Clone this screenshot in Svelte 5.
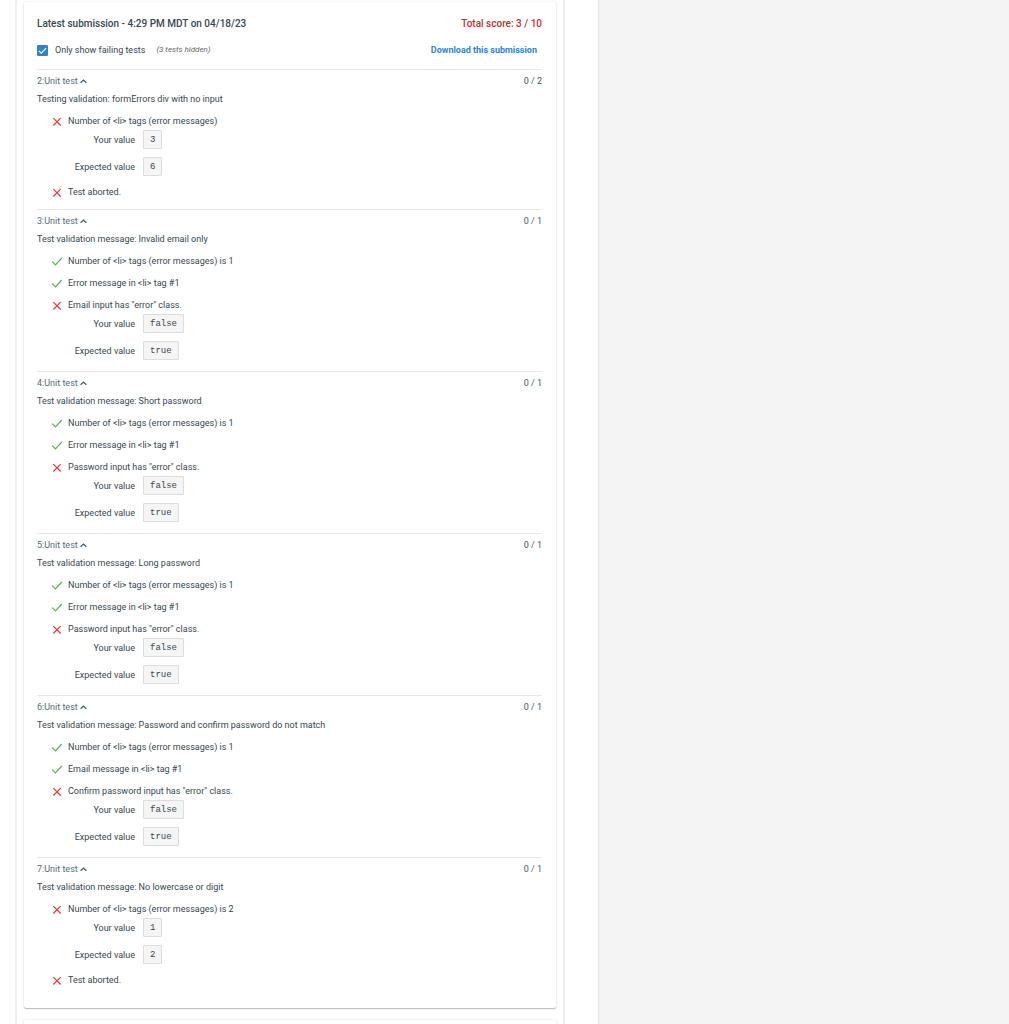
<script>
  let onlyFailing = $state(true);

  const isOne = { ok: true, text: 'Number of <li> tags (error messages) is 1' };
  const errorTag = { ok: true, text: 'Error message in <li> tag #1' };
  const aborted = { ok: false, text: 'Test aborted.' };

  let tests = $state([
    {
      number: 2,
      score: '0 / 2',
      open: true,
      description: 'Testing validation: formErrors div with no input',
      checks: [
        { ok: false, text: 'Number of <li> tags (error messages)', actual: '3', expected: '6' },
        aborted
      ]
    },
    {
      number: 3,
      score: '0 / 1',
      open: true,
      description: 'Test validation message: Invalid email only',
      checks: [
        isOne,
        errorTag,
        { ok: false, text: 'Email input has "error" class.', actual: 'false', expected: 'true' }
      ]
    },
    {
      number: 4,
      score: '0 / 1',
      open: true,
      description: 'Test validation message: Short password',
      checks: [
        isOne,
        errorTag,
        { ok: false, text: 'Password input has "error" class.', actual: 'false', expected: 'true' }
      ]
    },
    {
      number: 5,
      score: '0 / 1',
      open: true,
      description: 'Test validation message: Long password',
      checks: [
        isOne,
        errorTag,
        { ok: false, text: 'Password input has "error" class.', actual: 'false', expected: 'true' }
      ]
    },
    {
      number: 6,
      score: '0 / 1',
      open: true,
      description: 'Test validation message: Password and confirm password do not match',
      checks: [
        isOne,
        { ok: true, text: 'Email message in <li> tag #1' },
        { ok: false, text: 'Confirm password input has "error" class.', actual: 'false', expected: 'true' }
      ]
    },
    {
      number: 7,
      score: '0 / 1',
      open: true,
      description: 'Test validation message: No lowercase or digit',
      checks: [
        { ok: false, text: 'Number of <li> tags (error messages) is 2', actual: '1', expected: '2' },
        aborted
      ]
    }
  ]);
</script>

<div class="page">
  <main class="content">
    <div class="activity">
      <section class="card">
        <header class="row title">
          <h2>Latest submission - 4:29 PM MDT on 04/18/23</h2>
          <span class="total">Total score: 3 / 10</span>
        </header>

        <div class="row options">
          <label class="filter">
            <span class="box">
              <input type="checkbox" bind:checked={onlyFailing} />
              <svg viewBox="0 0 12 12" aria-hidden="true"><path d="M2 6.5 4.6 9 10 3.5" /></svg>
            </span>
            Only show failing tests
          </label>
          {#if onlyFailing}
            <em>(3 tests hidden)</em>
          {/if}
          <a href="#download">Download this submission</a>
        </div>

        {#each tests as test (test.number)}
          <article class="test">
            <div class="row">
              <button type="button" aria-expanded={test.open} onclick={() => (test.open = !test.open)}>
                {test.number}:Unit test
                <svg class:closed={!test.open} viewBox="0 0 7 6" aria-hidden="true"><path d="M.6 4.8 3.5 2 6.4 4.8" /></svg>
              </button>
              <span class="score">{test.score}</span>
            </div>
            {#if test.open}
              <p>{test.description}</p>
              <ul>
                {#each test.checks as check}
                  <li>
                    <div class="check">
                      {#if check.ok}
                        <svg class="pass" viewBox="0 0 12 10" role="img" aria-label="Passed"><path d="M1.2 5.6 4.4 8.8 10.8 2" /></svg>
                      {:else}
                        <svg class="fail" viewBox="0 0 12 10" role="img" aria-label="Failed"><path d="M2.3 2.1 9.7 9.5M9.7 2.1 2.3 9.5" /></svg>
                      {/if}
                      <span>{check.text}</span>
                    </div>
                    {#if check.expected}
                      <dl>
                        <dt>Your value</dt>
                        <dd><code>{check.actual}</code></dd>
                        <dt>Expected value</dt>
                        <dd><code>{check.expected}</code></dd>
                      </dl>
                    {/if}
                  </li>
                {/each}
              </ul>
            {/if}
          </article>
        {/each}
      </section>
      <section class="card next"></section>
    </div>
  </main>
</div>

<style>
  :global(body) {
    margin: 0;
    background: #f4f4f4;
  }

  .page {
    height: 100vh;
    overflow: hidden;
    font-family: Roboto, sans-serif;
    font-size: 9px;
    line-height: 12px;
    color: #37474f;
  }

  .content {
    box-sizing: border-box;
    width: 60%;
    max-width: 598px;
    min-height: 100%;
    padding: 0 33px 0 15px;
    background: #fff;
    box-shadow: 0 0 2px #ccc;
  }

  .activity {
    padding: 2px 7px 0;
    border: solid #eee;
    border-width: 0 2px;
  }

  .card {
    padding: 13px 14px 11px 13px;
    margin-bottom: 12px;
    background: #fff;
    border-radius: 2px;
    box-shadow: 0 1px 1px #bbb, 0 0 3px #e4e4e4;
  }

  .next {
    height: 100px;
  }

  .row {
    display: flex;
    align-items: center;
    justify-content: space-between;
  }

  .title {
    height: 18px;
    font-size: 10px;
    font-weight: 500;
  }

  h2 {
    margin: 0;
    font-size: 10px;
    font-weight: 500;
  }

  .total {
    color: #c62f2c;
  }

  .options {
    height: 34px;
    padding-right: 5px;
    margin-bottom: 2px;
  }

  .filter {
    display: flex;
    align-items: center;
    gap: 7px;
  }

  .box {
    display: grid;
    width: 11px;
    height: 11px;
  }

  .box input,
  .box svg {
    grid-area: 1 / 1;
    width: 11px;
    height: 11px;
    margin: 0;
  }

  .box input {
    appearance: none;
    border: 1px solid #3182ce;
    border-radius: 1px;
  }

  .box input:checked {
    background: #3182ce;
  }

  .box svg {
    pointer-events: none;
    stroke: #fff;
  }

  em {
    margin-left: 11px;
    font-size: 8px;
    color: #666;
  }

  a {
    margin-left: auto;
    font-weight: 700;
    color: #2e85d0;
    text-decoration: none;
  }

  svg {
    fill: none;
    stroke-width: 1.2;
  }

  .test {
    padding: 2px 0 1px;
    border-top: 1px solid #e8e8e8;
  }

  .test .row {
    height: 18px;
  }

  .score {
    color: #455a64;
  }

  button {
    display: flex;
    align-items: center;
    gap: 2px;
    padding: 0;
    border: 0;
    background: none;
    font: inherit;
    color: #546e7a;
    cursor: pointer;
  }

  button svg {
    width: 7px;
    height: 6px;
    stroke: #455a64;
  }

  .closed {
    transform: rotate(180deg);
  }

  p {
    margin: 0;
    line-height: 18px;
  }

  ul {
    margin: 0;
    padding: 7px 0 0 14px;
    list-style: none;
  }

  li {
    padding-bottom: 10px;
  }

  .check {
    display: flex;
    align-items: center;
    gap: 5px;
  }

  .check svg {
    width: 12px;
    height: 10px;
  }

  .pass {
    stroke: #58b158;
  }

  .fail {
    stroke: #e53935;
  }

  dl {
    display: grid;
    grid-template-columns: 84px auto;
    gap: 8px 8px;
    align-items: center;
    margin: 3px 0 0;
  }

  dt {
    text-align: right;
  }

  dd {
    display: flex;
    margin: 0;
  }

  code {
    padding: 4px 6px 3px;
    border: 1px solid #ddd;
    border-radius: 1px;
    background: #f5f5f5;
    font-family: "Liberation Mono", monospace;
    font-size: 9px;
    line-height: 10px;
  }
</style>
